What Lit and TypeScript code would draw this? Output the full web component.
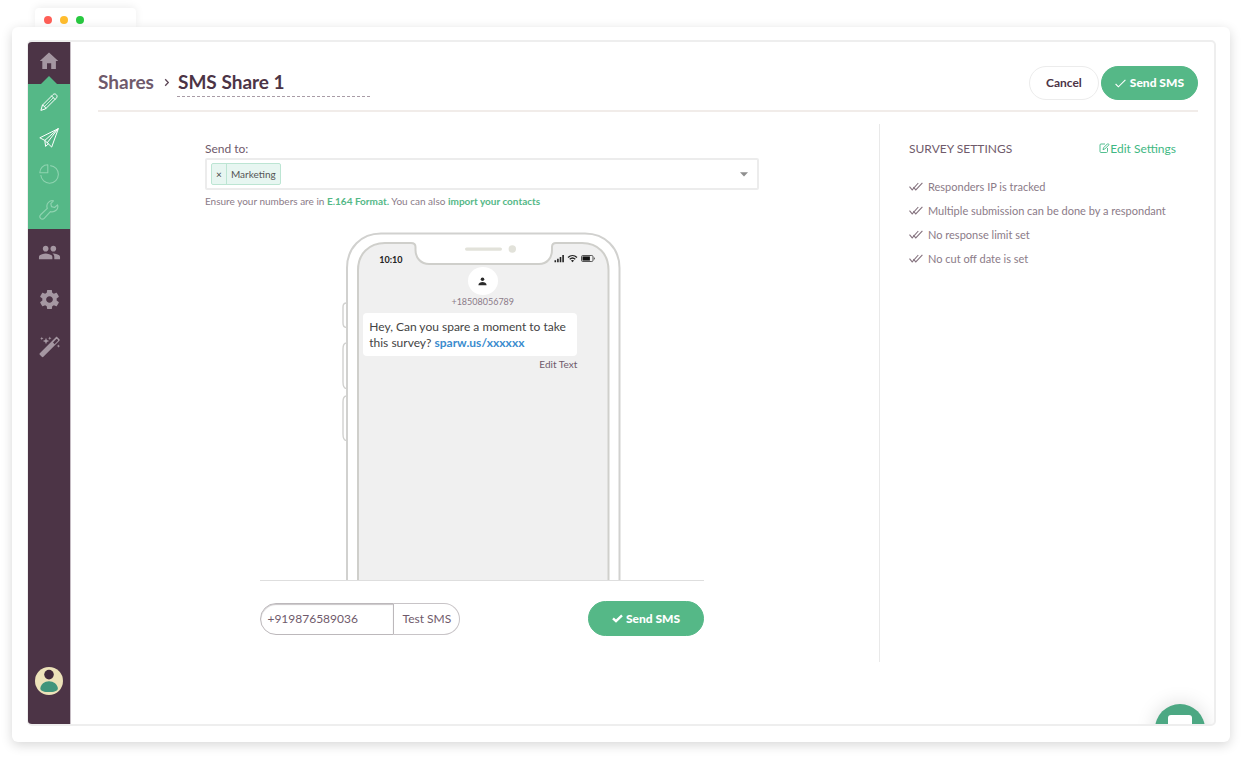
import { LitElement, html, css, svg } from "lit";
import { customElement, property, state } from "lit/decorators.js";

const tokens = css`
  :host {
    --plum: #4c3446;
    --plum-soft: #6f5a6b;
    --plum-mute: #8b7b88;
    --green: #55b887;
    --line: #e9e9e9;
    box-sizing: border-box;
    font-family: Lato, "Open Sans", sans-serif;
    color: var(--plum-soft);
  }
  * {
    box-sizing: border-box;
  }
  button,
  input {
    font: inherit;
    color: inherit;
    margin: 0;
  }
  button {
    cursor: pointer;
  }
  a {
    color: inherit;
    text-decoration: none;
  }
  svg {
    display: block;
    flex: none;
  }
`;

const homeIcon = svg`<path fill="currentColor" d="M9 0.5 L18.3 9 L15.9 9 L15.9 17 L11.2 17 L11.2 11.2 L7 11.2 L7 17 L2.3 17 L2.3 9 L-0.3 9 Z"/>`;

const pencilIcon = svg`<g fill="none" stroke="currentColor" stroke-width="1" stroke-linejoin="round" stroke-linecap="round">
  <path d="M1 17 L2.4 12.2 L12.9 1.7 C13.9 0.7 15.3 0.7 16.3 1.7 C17.3 2.7 17.3 4.1 16.3 5.1 L5.8 15.6 Z"/>
  <path d="M2.4 12.2 C3.8 12 4.2 12.6 4.2 13.8 C5.4 13.8 6 14.4 5.8 15.6 M11.6 3 L15 6.4"/>
  <path stroke-width="0.7" d="M4.4 13.6 L13.2 4.8"/></g>`;

const planeIcon = svg`<g fill="none" stroke="currentColor" stroke-width="1" stroke-linejoin="round" stroke-linecap="round">
  <path d="M19 0.8 L0.8 9.8 L5.8 12.4 L12.4 18.8 Z"/>
  <path d="M19 0.8 L5.8 12.4 L6.6 18.4 L9.4 15.8 M19 0.8 L8.2 14.8"/></g>`;

const pieIcon = svg`<g fill="none" stroke="currentColor" stroke-width="1.1" stroke-linejoin="round">
  <path d="M11.2 1.6 A8.8 8.8 0 1 1 1.8 11"/>
  <path d="M8.8 0.8 L8.8 8.8 L0.8 8.8 C0.8 4.2 4.2 0.8 8.800 0.8 Z"/></g>`;

const wrenchIcon = svg`<path fill="none" stroke="currentColor" stroke-width="1.2" stroke-linejoin="round"
  d="M1.6 18.4 C0.5 17.3 0.5 15.9 1.6 14.8 L8.3 8.4 C7.4 5.9 8 3.6 9.7 2.1 C11 0.9 12.8 0.5 14.4 0.9 L11.8 3.6 L12.5 6.7 L15.6 7.5 L18.5 4.9 C19.2 6.9 18.6 9 17.1 10.3 C15.5 11.7 13.4 12.1 11.4 11.6 L5.2 18.3 C4.2 19.4 2.6 19.4 1.6 18.4 Z"/>`;

const peopleIcon = svg`<path fill="currentColor" d="M16 11c1.66 0 2.99-1.34 2.99-3S17.66 5 16 5s-3 1.34-3 3 1.34 3 3 3zm-8 0c1.66 0 2.99-1.34 2.99-3S9.66 5 8 5 5 6.34 5 8s1.34 3 3 3zm0 2c-2.33 0-7 1.17-7 3.5V19h14v-2.5c0-2.33-4.67-3.5-7-3.5zm8 0c-.29 0-.62.02-.97.05 1.16.84 1.97 1.97 1.97 3.45V19h6v-2.5c0-2.33-4.67-3.5-7-3.5z"/>`;

const gearIcon = svg`<path fill="currentColor" d="M19.43 12.98c.04-.32.07-.64.07-.98s-.03-.66-.07-.98l2.11-1.65c.19-.15.24-.42.12-.64l-2-3.46c-.12-.22-.39-.3-.61-.22l-2.49 1c-.52-.4-1.08-.73-1.69-.98l-.38-2.65C14.46 2.18 14.25 2 14 2h-4c-.25 0-.46.18-.49.42l-.38 2.65c-.61.25-1.17.59-1.69.98l-2.49-1c-.23-.09-.49 0-.61.22l-2 3.46c-.13.22-.07.49.12.64l2.11 1.65c-.04.32-.07.65-.07.98s.03.66.07.98l-2.11 1.65c-.19.15-.24.42-.12.64l2 3.46c.12.22.39.3.61.22l2.49-1c.52.4 1.08.73 1.69.98l.38 2.65c.03.24.24.42.49.42h4c.25 0 .46-.18.49-.42l.38-2.65c.61-.25 1.17-.59 1.69-.98l2.49 1c.23.09.49 0 .61-.22l2-3.46c.12-.22.07-.49-.12-.64l-2.11-1.65zM12 15.5c-1.93 0-3.5-1.57-3.5-3.5s1.57-3.5 3.5-3.5 3.5 1.57 3.5 3.5-1.57 3.5-3.5 3.5z"/>`;

const wandIcon = svg`<g fill="currentColor">
  <path fill-rule="evenodd" d="M0.8 17.2 L16.8 1.2 C17.3 0.7 17.9 0.7 18.4 1.2 L20.4 3.2 C20.9 3.7 20.9 4.3 20.4 4.8 L4.4 20.8 C3.9 21.3 3.3 21.3 2.8 20.8 L0.8 18.8 C0.3 18.3 0.3 17.7 0.8 17.2 Z M14 6.6 L15.6 8.2 L19 4.8 C19.2 4.5 19.2 4.2 19 4 L18.1 3.1 C17.8 2.9 17.6 2.9 17.3 3.1 Z"/>
  <path d="M7 1.8 L7.9 4.1 L10.2 5 L7.9 5.9 L7 8.2 L6.1 5.9 L3.8 5 L6.1 4.1 Z"/>
  <path d="M2.8 0.8 L3.3 2 L4.5 2.5 L3.3 3 L2.8 4.2 L2.3 3 L1.1 2.5 L2.3 2 Z M10.8 0.6 L11.3 1.8 L12.5 2.3 L11.3 2.8 L10.8 4 L10.3 2.8 L9.1 2.3 L10.3 1.8 Z M19.4 8.4 L19.9 9.6 L21.1 10.1 L19.9 10.6 L19.4 11.8 L18.9 10.6 L17.7 10.1 L18.9 9.6 Z"/></g>`;

@customElement("side-nav")
export class SideNav extends LitElement {
  static styles = [
    tokens,
    css`
      :host {
        display: flex;
        flex: none;
        width: 43px;
        background: var(--plum);
        border-right: 1px solid #c6bdc4;
      }
      nav {
        display: flex;
        flex: 1;
        flex-direction: column;
        color: #a597a2;
      }
      a {
        display: flex;
        align-items: center;
        justify-content: center;
        height: 47px;
      }
      .home {
        height: 42px;
        padding-bottom: 5px;
      }
      .survey {
        position: relative;
        padding-bottom: 1px;
        background: var(--green);
        color: #fff;
      }
      .survey::before {
        content: "";
        position: absolute;
        left: 50%;
        top: -8px;
        margin-left: -8px;
        border: 8px solid transparent;
        border-top: 0;
        border-bottom-color: var(--green);
      }
      .survey a {
        height: 36px;
      }
      .dim {
        color: #8fd3b0;
      }
      .account {
        margin-top: auto;
        height: 28px;
        margin-bottom: 29px;
      }
    `,
  ];

  render() {
    return html`
      <nav aria-label="Main">
        <a class="home" href="#home" aria-label="Home"><svg width="18" height="17" viewBox="0 0 18 17">${homeIcon}</svg></a>
        <div class="survey">
          <a href="#design" aria-label="Design"><svg width="18" height="18" viewBox="0 0 18 18">${pencilIcon}</svg></a>
          <a href="#share" aria-label="Share"><svg width="20" height="20" viewBox="0 0 20 20">${planeIcon}</svg></a>
          <a class="dim" href="#reports" aria-label="Reports"><svg width="20" height="20" viewBox="0 0 20 20">${pieIcon}</svg></a>
          <a class="dim" href="#setup" aria-label="Configure"><svg width="20" height="20" viewBox="0 0 20 20">${wrenchIcon}</svg></a>
        </div>
        <a href="#contacts" aria-label="Contacts"><svg width="23" height="23" viewBox="0 0 24 24">${peopleIcon}</svg></a>
        <a href="#settings" aria-label="Settings"><svg width="23" height="23" viewBox="0 0 24 24">${gearIcon}</svg></a>
        <a href="#integrations" aria-label="Integrations"><svg width="21" height="22" viewBox="0 0 21 22">${wandIcon}</svg></a>
        <a class="account" href="#account" aria-label="Account">
          <svg width="28" height="28" viewBox="0 0 28 28">
            <circle cx="14" cy="14" r="14" fill="#ece2b9" />
            <circle cx="14" cy="7.6" r="4.8" fill="#402a3b" />
            <path d="M5.4 21.4 C5.4 17.4 9.6 14.2 14 14.2 C18.4 14.2 22.8 17.4 22.8 21.4 C22.8 24 18.6 25 14 25 C9.4 25 5.4 24 5.4 21.4 Z" fill="#3f957c" />
          </svg>
        </a>
      </nav>
    `;
  }
}

@customElement("phone-preview")
export class PhonePreview extends LitElement {
  @property() sender = "";
  @property() link = "";

  static styles = [
    tokens,
    css`
      :host {
        position: relative;
        display: block;
        width: 280px;
        height: 348px;
      }
      .shell {
        position: absolute;
        inset: 0;
      }
      .screen {
        position: relative;
        display: flex;
        flex-direction: column;
        padding: 20px 24px 0 21px;
      }
      .status {
        display: flex;
        justify-content: space-between;
        align-items: flex-start;
        padding: 0 2px 0 16px;
        height: 15px;
        font-size: 9px;
        line-height: 16px;
        font-weight: 700;
        color: #222;
      }
      .person {
        display: flex;
        align-items: center;
        justify-content: center;
        align-self: center;
        width: 30px;
        height: 28px;
        margin-left: 4px;
        border-radius: 50%;
        background: #fff;
      }
      .sender {
        align-self: center;
        margin-left: 4px;
        font-size: 9px;
        line-height: 14px;
        color: var(--plum-mute);
      }
      .message {
        align-self: flex-start;
        width: 214px;
        margin: 4px 0 0;
        padding: 6px 6px 5px;
        border-radius: 4px;
        background: #fff;
        font-size: 12px;
        line-height: 16px;
        color: #444;
      }
      .message a {
        font-weight: 700;
        color: #3b8cce;
      }
      .edit {
        align-self: flex-start;
        width: 214px;
        padding: 1px 0;
        border: 0;
        background: none;
        font-size: 10px;
        line-height: 14px;
        text-align: right;
        color: var(--plum-soft);
      }
    `,
  ];

  render() {
    return html`
      <svg class="shell" width="280" height="348" viewBox="0 0 280 348" aria-hidden="true">
        <g fill="none" stroke="#d1d1cf">
          <path stroke-width="1.4" d="M4.5 71 C2 71 1 73 1 75 V91 C1 94 2 95.5 4.5 95.5 M4.5 111 C2 111 1 114 1 117 V150 C1 154 2 156.5 4.5 156.5 M4.5 164 C2 164 1 167 1 170 V202 C1 206 2 208.5 4.5 208.5" />
          <path stroke-width="2" fill="#fff" d="M5 350 V36 C5 16 19 1.5 39 1.5 H243 C263 1.5 277.500 16 277.500 36 V350" />
          <path stroke-width="2" fill="#f0f0f0" stroke="#cfcfcb" d="M16 350 V38 C16 22 27 11 43 11 H69 C72 11 73.500 12.500 73.500 15 V18 C73.500 26 79 32 87 32 H197 C205 32 210 26 210 18 V15 C210 12.500 211 11 214 11 H240 C256 11 266.500 22 266.500 38 V350" />
        </g>
        <rect x="123" y="15.500" width="37" height="3.200" rx="1.600" fill="#e2e2da" />
        <circle cx="170.300" cy="17" r="3.700" fill="#e2e2da" />
      </svg>
      <div class="screen">
        <div class="status">
          <span>10:10</span>
          <svg width="42" height="12" viewBox="0 0 42 12" aria-hidden="true">
            <path fill="#222" d="M0.500 8.200h1.600v2H0.500z M3.100 6.800h1.600v3.400H3.100z M5.700 5h1.600v5.200H5.700z M8.300 3h1.600v7.200H8.300z" />
            <path fill="none" stroke="#222" stroke-width="1.300" d="M14 5.400 C16.600 3 20.400 3 23 5.400 M15.700 7.300 C17.300 5.800 19.700 5.800 21.300 7.300" />
            <path fill="#222" d="M16.900 8.600 C17.800 7.900 19.200 7.900 20.100 8.600 L18.500 10.300 Z" />
            <rect x="27.500" y="3.500" width="11.500" height="6" rx="1.200" fill="none" stroke="#444" stroke-width="0.900" />
            <rect x="28.500" y="4.400" width="7.400" height="4.200" fill="#111" />
            <path fill="#444" d="M39.900 5.200 C41.200 5.800 41.200 7.200 39.900 7.800 Z" />
          </svg>
        </div>
        <div class="person">
          <svg width="9" height="9" viewBox="0 0 9 9" aria-hidden="true">
            <circle cx="4.500" cy="2.200" r="1.800" fill="#2b2b2b" />
            <path d="M0.400 8.200 C0.400 6 2.600 5 4.500 5 C6.400 5 8.600 6 8.600 8.200 Z" fill="#2b2b2b" />
          </svg>
        </div>
        <div class="sender">${this.sender}</div>
        <p class="message">
          Hey, Can you spare a moment to take<br />
          this survey? <a href="#preview">${this.link}</a>
        </p>
        <button class="edit" type="button">Edit Text</button>
      </div>
    `;
  }
}

@customElement("survey-settings")
export class SurveySettings extends LitElement {
  @property({ attribute: false }) items: string[] = [];

  static styles = [
    tokens,
    css`
      :host {
        display: block;
        padding: 16px 22px 0 29px;
        border-left: 1px solid var(--line);
      }
      header {
        display: flex;
        align-items: center;
        justify-content: space-between;
        line-height: 18px;
      }
      h2 {
        margin: 0;
        font-size: 12px;
        font-weight: 400;
      }
      .edit {
        display: flex;
        align-items: center;
        font-size: 12px;
        color: #3fb883;
      }
      ul {
        margin: 16px 0 0;
        padding: 0;
        list-style: none;
      }
      li {
        display: flex;
        align-items: center;
        gap: 5px;
        height: 24px;
        font-size: 11px;
        color: var(--plum-mute);
      }
    `,
  ];

  render() {
    return html`
      <header>
        <h2>SURVEY SETTINGS</h2>
        <a class="edit" href="#edit-settings">
          <svg width="11" height="12" viewBox="0 0 11 12" fill="none" stroke="currentColor" stroke-width="0.9" stroke-linejoin="round" aria-hidden="true">
            <path d="M6 1 H2 C1.300 1 1 1.400 1 2 V8.500 C1 9.200 1.400 9.500 2 9.500 H7.500 C8.200 9.500 8.500 9.100 8.500 8.500 V5" />
            <path d="M4 6.700 L4.500 4.800 L8.400 0.900 C9.200 0.300 10.300 1.300 9.700 2.100 L5.800 6 Z" />
          </svg>
          Edit Settings
        </a>
      </header>
      <ul>
        ${this.items.map(
          (text) => html`<li>
            <svg width="14" height="10" viewBox="0 0 14 10" fill="none" stroke="#85737f" stroke-width="1.100" aria-hidden="true">
              <path d="M0.500 5.600 L3.200 8.800 L9.300 2 M4.300 6.200 L6.800 8.900 L13.400 1.800" />
            </svg>
            ${text}
          </li>`
        )}
      </ul>
    `;
  }
}

@customElement("app-root")
export class AppRoot extends LitElement {
  @state() private recipients = ["Marketing"];

  private remove(name: string) {
    this.recipients = this.recipients.filter((r) => r !== name);
  }

  static styles = [
    tokens,
    css`
      :host {
        display: flex;
        flex-direction: column;
        min-height: 100vh;
        padding: 8px 12px 16px;
        background: #fff;
      }
      .tab {
        display: flex;
        gap: 8px;
        width: 101px;
        height: 19px;
        margin-left: 23px;
        padding: 8px 9px 0;
        border-radius: 4px 4px 0 0;
        background: #fff;
        box-shadow: 0 -1px 8px rgba(0, 0, 0, 0.08);
      }
      .dot {
        width: 8px;
        height: 8px;
        border-radius: 50%;
      }
      .red {
        background: #ff5f57;
      }
      .amber {
        background: #ffbd2e;
      }
      .lime {
        background: #28c940;
      }
      .window {
        position: relative;
        display: flex;
        flex: 1;
        padding: 13px 14px 16px 15px;
        border-radius: 6px;
        background: #fff;
        box-shadow: 0 3px 12px rgba(0, 0, 0, 0.16);
      }
      .frame {
        position: relative;
        display: flex;
        flex: 1;
        overflow: hidden;
        border: 2px solid #eee;
        border-left-width: 1px;
        border-radius: 5px;
      }
      main {
        flex: 1;
        min-width: 0;
        padding: 24px 16px 0 27px;
      }
      .top {
        display: flex;
        align-items: center;
        gap: 2px;
        padding-bottom: 10px;
        border-bottom: 2px solid #f1ece9;
      }
      .crumbs {
        display: flex;
        flex: 1;
        align-items: center;
        padding-bottom: 2px;
        font-size: 19px;
        font-weight: 700;
        line-height: 28px;
      }
      .crumbs svg {
        margin: 0 7px 0 10px;
      }
      .name {
        width: 193px;
        height: 29px;
        padding: 0 0 0 1px;
        border: 0;
        border-bottom: 1px dashed #a99ca6;
        background: none;
        color: var(--plum);
        outline: none;
      }
      .pill {
        display: flex;
        align-items: center;
        justify-content: center;
        height: 34px;
        padding: 0 16px;
        border: 1px solid #ececec;
        border-radius: 17px;
        background: #fff;
        font-size: 12px;
        line-height: 14px;
        font-weight: 700;
        color: var(--plum);
      }
      .primary {
        gap: 4px;
        padding: 0 13px;
        border-color: var(--green);
        background: var(--green);
        font-weight: 900;
        color: #fff;
      }
      .send {
        width: 116px;
        height: 35px;
        gap: 3px;
        border-radius: 18px;
      }
      .body {
        display: grid;
        grid-template-columns: minmax(0, 781fr) minmax(0, 319fr);
        padding-top: 12px;
      }
      .compose {
        display: flex;
        flex-direction: column;
        width: 71%;
        margin-left: 13.7%;
        padding: 16px 0 26px;
      }
      label {
        font-size: 12px;
        line-height: 18px;
      }
      .picker {
        display: flex;
        align-items: center;
        height: 32px;
        padding: 0 9px 0 4px;
        border: 2px solid #ececec;
        border-radius: 2px;
      }
      .tag {
        display: flex;
        align-items: center;
        height: 22px;
        border: 1px solid #bce5d3;
        border-radius: 2px;
        background: #e7f6f1;
        font-size: 10px;
        color: #555;
      }
      .tag button {
        width: 15px;
        height: 20px;
        padding: 0;
        border: 0;
        border-right: 1px solid #bce5d3;
        background: none;
        line-height: 18px;
        color: #444;
      }
      .tag span {
        padding: 0 4px;
      }
      .picker input {
        flex: 1;
        min-width: 0;
        border: 0;
        outline: none;
        background: none;
      }
      .hint {
        margin: 3px 0 0;
        font-size: 10px;
        line-height: 16px;
        color: var(--plum-mute);
      }
      .hint a {
        font-weight: 700;
        color: var(--green);
      }
      phone-preview {
        align-self: center;
        margin-top: 23px;
      }
      .actions {
        display: flex;
        align-items: center;
        justify-content: space-between;
        align-self: center;
        width: 80%;
        padding-top: 20px;
        border-top: 1px solid #dedede;
      }
      .test {
        display: flex;
        width: 200px;
        height: 32px;
        font-size: 12px;
      }
      .test input {
        flex: 1;
        min-width: 0;
        padding: 0 6px;
        border: 1px solid #bcb8bb;
        border-radius: 16px 0 0 16px;
        box-shadow: inset 0 1px 1px #c9c6c8;
        outline: none;
        background: none;
      }
      .test button {
        width: 66px;
        padding: 0;
        border: 1px solid #c8c4c7;
        border-left: 0;
        border-radius: 0 16px 16px 0;
        background: none;
      }
      .chat {
        position: absolute;
        right: 9px;
        bottom: -30px;
        display: flex;
        justify-content: center;
        align-items: flex-start;
        width: 50px;
        height: 50px;
        padding: 11px 0 0;
        border: 0;
        border-radius: 50%;
        background: #4ca883;
        box-shadow: 0 0 20px rgba(0, 0, 0, 0.15);
      }
    `,
  ];

  render() {
    return html`
      <div class="tab">
        <span class="dot red"></span><span class="dot amber"></span><span class="dot lime"></span>
      </div>
      <div class="window">
        <div class="frame">
          <side-nav></side-nav>
          <main>
            <div class="top">
              <div class="crumbs">
                <a href="#shares">Shares</a>
                <svg width="6" height="9" viewBox="0 0 6 9" fill="none" stroke="#5d4757" stroke-width="1.300" aria-hidden="true">
                  <path d="M1.200 1.200 L4.300 4.500 L1.200 7.800" />
                </svg>
                <input class="name" type="text" aria-label="Share name" value="SMS Share 1" />
              </div>
              <button class="pill" type="button">Cancel</button>
              <button class="pill primary" type="button">
                <svg width="11" height="10" viewBox="0 0 11 10" fill="none" stroke="#fff" stroke-width="1.100" aria-hidden="true">
                  <path d="M0.600 6 L3.400 8.800 L10.400 1.800" />
                </svg>
                Send SMS
              </button>
            </div>
            <div class="body">
              <section class="compose">
                <label for="recipients">Send to:</label>
                <div class="picker">
                  ${this.recipients.map(
                    (name) => html`<span class="tag"
                      ><button type="button" aria-label="Remove ${name}" @click=${() => this.remove(name)}>×</button
                      ><span>${name}</span></span
                    >`
                  )}
                  <input id="recipients" type="text" />
                  <svg width="8" height="5" viewBox="0 0 8 5" aria-hidden="true"><path d="M0 0.300 H8 L4 4.600 Z" fill="#8f8f8f" /></svg>
                </div>
                <p class="hint">
                  Ensure your numbers are in <a href="#format">E.164 Format.</a> You can also
                  <a href="#import">import your contacts</a>
                </p>
                <phone-preview sender="+18508056789" link="sparw.us/xxxxxx"></phone-preview>
                <div class="actions">
                  <div class="test">
                    <input type="tel" aria-label="Test number" value="+919876589036" />
                    <button type="button">Test SMS</button>
                  </div>
                  <button class="pill primary send" type="button">
                    <svg width="11" height="9" viewBox="0 0 11 9" fill="none" stroke="#fff" stroke-width="2.400" aria-hidden="true">
                      <path d="M1 4.400 L4 7.200 L10 1.400" />
                    </svg>
                    Send SMS
                  </button>
                </div>
              </section>
              <survey-settings
                .items=${[
                  "Responders IP is tracked",
                  "Multiple submission can be done by a respondant",
                  "No response limit set",
                  "No cut off date is set",
                ]}
              ></survey-settings>
            </div>
          </main>
          <button class="chat" type="button" aria-label="Open chat">
            <svg width="24" height="20" viewBox="0 0 24 20" aria-hidden="true"><rect width="24" height="20" rx="3" fill="#fff" /></svg>
          </button>
        </div>
      </div>
    `;
  }
}
